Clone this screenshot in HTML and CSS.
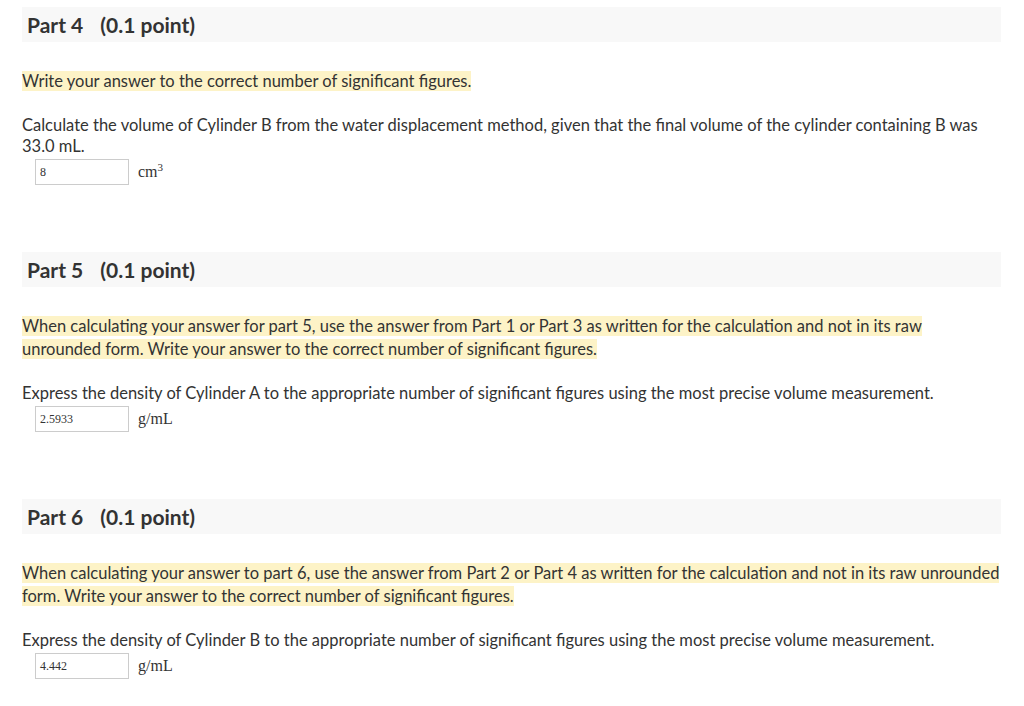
FILE: index.html
```html
<!DOCTYPE html>
<html>
<head>
<meta charset="utf-8">
<link rel="stylesheet" href="styles.css">
</head>
<body>
<div class="page">
  <section class="part">
    <div class="part-head"><span class="part-num">Part 4</span><span class="part-pts">(0.1 point)</span></div>
    <p class="hint"><span class="hl">Write your answer to the correct number of significant figures.</span></p>
    <p class="question">Calculate the volume of Cylinder B from the water displacement method, given that the final volume of the cylinder containing B was 33.0 mL.</p>
    <div class="answer"><span class="box">8</span><span class="unit">cm<sup>3</sup></span></div>
  </section>
  <section class="part">
    <div class="part-head"><span class="part-num">Part 5</span><span class="part-pts">(0.1 point)</span></div>
    <p class="hint"><span class="hl">When calculating your answer for part 5, use the answer from Part 1 or Part 3 as written for the calculation and not in its raw unrounded form. Write your answer to the correct number of significant figures.</span></p>
    <p class="question">Express the density of Cylinder A to the appropriate number of significant figures using the most precise volume measurement.</p>
    <div class="answer"><span class="box">2.5933</span><span class="unit">g/mL</span></div>
  </section>
  <section class="part">
    <div class="part-head"><span class="part-num">Part 6</span><span class="part-pts">(0.1 point)</span></div>
    <p class="hint"><span class="hl">When calculating your answer to part 6, use the answer from Part 2 or Part 4 as written for the calculation and not in its raw unrounded form. Write your answer to the correct number of significant figures.</span></p>
    <p class="question">Express the density of Cylinder B to the appropriate number of significant figures using the most precise volume measurement.</p>
    <div class="answer"><span class="box">4.442</span><span class="unit">g/mL</span></div>
  </section>
</div>
</body>
</html>
```

FILE: styles.css
```css
html, body {
  margin: 0;
  padding: 0;
  background: #ffffff;
}
body {
  font-family: Lato, "Open Sans", sans-serif;
  color: #333333;
  font-size: 16.5px;
}
.page {
  width: 979px;
  padding: 7px 0 0 22px;
}
.part {
  margin-bottom: 67px;
}
.part:last-child {
  margin-bottom: 0;
}
.part-head {
  background: #f8f8f8;
  height: 35px;
  padding-left: 5px;
  display: flex;
  align-items: center;
  font-weight: bold;
  font-size: 21px;
  color: #333;
}
.part-pts {
  margin-left: 17px;
}
.hint {
  margin: 28px 0 0 0;
  line-height: 23px;
}
.hl {
  background: #fdf3c7;
}
.question {
  margin: 22px 0 0 0;
  line-height: 21px;
}
.answer {
  display: flex;
  align-items: center;
  margin-top: 2px;
  padding-left: 13px;
}
.box {
  width: 88px;
  height: 24px;
  border: 1px solid #cccccc;
  font-family: "Liberation Serif", serif;
  font-size: 12px;
  line-height: 24px;
  padding-left: 4px;
  color: #333;
  box-sizing: content-box;
}
.unit {
  font-family: "Liberation Serif", serif;
  font-size: 16px;
  margin-left: 9px;
  color: #333;
}
.unit sup {
  font-size: 11px;
  vertical-align: 6px;
  line-height: 0;
}
```
